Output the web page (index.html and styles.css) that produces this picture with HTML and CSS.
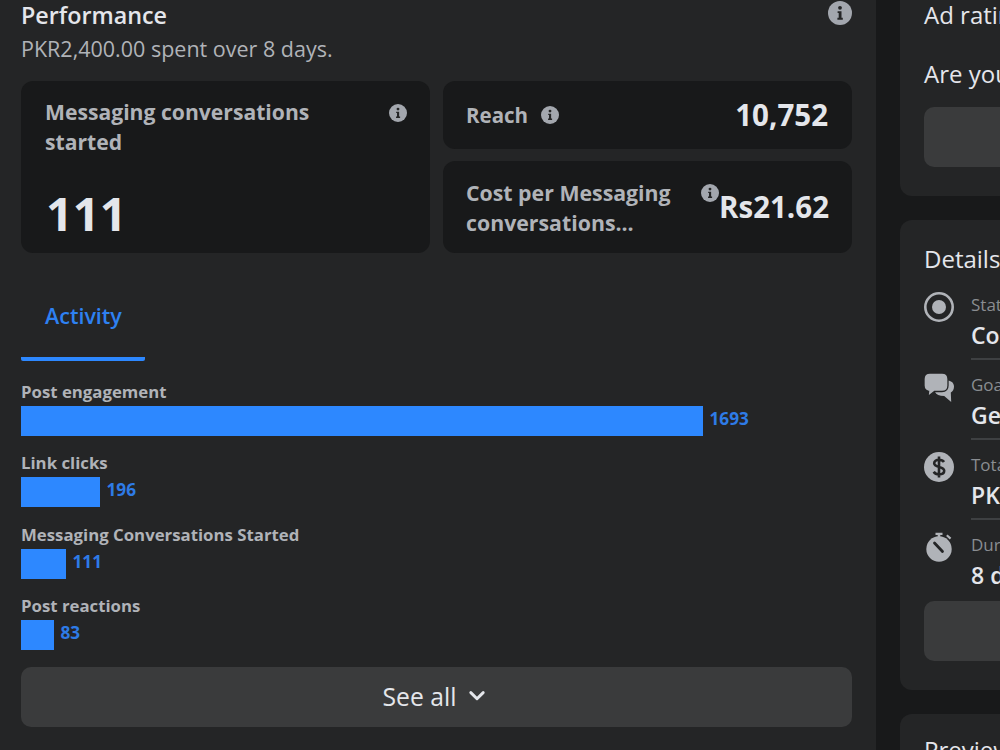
FILE: index.html
```html
<!DOCTYPE html>
<html lang="en">
<head>
<meta charset="utf-8">
<title>Performance</title>
<link rel="stylesheet" href="styles.css">
</head>
<body>
<svg class="defs" width="0" height="0" aria-hidden="true">
  <symbol id="info" viewBox="0 0 24 24">
    <circle cx="12" cy="12" r="12" fill="currentColor"/>
    <circle cx="12" cy="6.8" r="1.9" fill="#242526"/>
    <path d="M9.6 10.2h3.9v6.6h1.3v1.9H9.4v-1.9h1.3v-4.7H9.6z" fill="#242526"/>
  </symbol>
</svg>
<div class="page">
  <main class="main">
    <header class="head">
      <div>
        <h1 class="title">Performance</h1>
        <p class="sub"><span class="sub-strong">PKR2,400.00</span> spent over <span class="sub-strong">8 days.</span></p>
      </div>
      <svg class="info info-head"><use href="#info"/></svg>
    </header>

    <section class="stats">
      <div class="stat stat-big">
        <div class="stat-top">
          <span class="stat-label">Messaging conversations started</span>
          <svg class="info"><use href="#info"/></svg>
        </div>
        <div class="big-value">111</div>
      </div>
      <div class="stat-side">
        <div class="stat stat-row stat-reach">
          <span class="stat-label stat-label-short">Reach</span>
          <svg class="info info-inline"><use href="#info"/></svg>
          <span class="stat-value">10,752</span>
        </div>
        <div class="stat stat-row stat-cost">
          <span class="stat-label stat-label-wrap">Cost per Messaging conversations...</span>
          <svg class="info info-cost"><use href="#info"/></svg>
          <span class="stat-value">Rs21.62</span>
        </div>
      </div>
    </section>

    <nav class="tabs"><span class="tab">Activity</span></nav>

    <section class="bars">
      <div class="bar-row">
        <div class="bar-label">Post engagement</div>
        <div class="bar-line"><span class="bar" style="width:682px"></span><span class="bar-num">1693</span></div>
      </div>
      <div class="bar-row">
        <div class="bar-label">Link clicks</div>
        <div class="bar-line"><span class="bar" style="width:79px"></span><span class="bar-num">196</span></div>
      </div>
      <div class="bar-row">
        <div class="bar-label">Messaging Conversations Started</div>
        <div class="bar-line"><span class="bar" style="width:45px"></span><span class="bar-num">111</span></div>
      </div>
      <div class="bar-row">
        <div class="bar-label">Post reactions</div>
        <div class="bar-line"><span class="bar" style="width:33px"></span><span class="bar-num">83</span></div>
      </div>
    </section>

    <button class="see-all" type="button">See all
      <svg class="chev" viewBox="0 0 16 16"><path d="M2.5 5l5.5 5.5L13.5 5" fill="none" stroke="currentColor" stroke-width="2.6" stroke-linecap="round" stroke-linejoin="round"/></svg>
    </button>
  </main>

  <aside class="side">
    <section class="card card-rating">
      <h2 class="card-title">Ad rating</h2>
      <p class="question">Are you satisfied?</p>
      <div class="wide-btn"></div>
    </section>

    <section class="card card-details">
      <h2 class="card-title">Details</h2>
      <ul class="details">
        <li class="detail">
          <svg class="d-icon" viewBox="0 0 30 30"><circle cx="15" cy="15" r="13.7" fill="none" stroke="#b0b3b8" stroke-width="2.6"/><circle cx="15" cy="15" r="7" fill="#b0b3b8"/></svg>
          <div class="d-text"><span class="d-key">Status</span><span class="d-val">Completed</span></div>
        </li>
        <li class="detail">
          <svg class="d-icon" viewBox="0 0 30 30"><path d="M24 8.500c3.500.4 6 2.600 6 6 0 3-1.200 5-3.200 6l.4 9.500-7-6c-4.800 0-8-1.500-9.200-4z" fill="#b0b3b8"/><path d="M6 1h12c3.800 0 6 2.300 6 6v6.500c0 3.700-2.200 6-6 6h-7.500L4 24.500l.6-5.200C2 18.800 0 16.600 0 13.500V7c0-3.700 2.200-6 6-6z" fill="#b0b3b8" stroke="#242526" stroke-width="1.300"/></svg>
          <div class="d-text"><span class="d-key">Goal</span><span class="d-val">Get more messages</span></div>
        </li>
        <li class="detail">
          <svg class="d-icon" viewBox="0 0 30 30"><circle cx="15" cy="15" r="15" fill="#b0b3b8"/><path d="M20 10c-1-1.500-2.800-2.300-5-2.300-2.800 0-4.800 1.400-4.800 3.600 0 4.900 10 2.600 10 7.500 0 2.300-2.200 3.600-5.200 3.600-2.400 0-4.300-1-5.300-2.600M15 4.500v21" fill="none" stroke="#242526" stroke-width="2.600"/></svg>
          <div class="d-text"><span class="d-key">Total budget</span><span class="d-val">PKR2,400.00</span></div>
        </li>
        <li class="detail detail-last">
          <svg class="d-icon" viewBox="0 0 30 30"><circle cx="15" cy="17" r="12.700" fill="#b0b3b8"/><path d="M11.500 0.700h7v2.300h-2.200v2h-2.600v-2h-2.200zM23.500 2.400l3.800 3.400-1.500 1.600-3.700-3.400z" fill="#b0b3b8"/><path d="M10.500 11l8 8.500" stroke="#242526" stroke-width="2.800" stroke-linecap="round"/></svg>
          <div class="d-text"><span class="d-key">Duration</span><span class="d-val">8 days</span></div>
        </li>
      </ul>
      <div class="wide-btn"></div>
    </section>

    <section class="card card-preview">
      <h2 class="card-title">Preview</h2>
    </section>
  </aside>
</div>
</body>
</html>
```

FILE: styles.css
```css
* { box-sizing: border-box; }
html, body { margin: 0; padding: 0; height: 750px; overflow: hidden; background: #18191a; }
body { font-family: "Open Sans", "Noto Sans", "Liberation Sans", sans-serif; color: #e4e6eb; }
.defs { position: absolute; }
h1, h2, p, ul { margin: 0; padding: 0; }
ul { list-style: none; }

.page { display: flex; width: 1000px; height: 750px; overflow: hidden; }

.main { flex: 0 0 876px; height: 750px; background: #242526; padding: 0 24px 0 21px; }

.head { display: flex; justify-content: space-between; height: 81px; }
.title { font-size: 23.3px; font-weight: 600; line-height: 30px; color: #e4e6eb; }
.sub { font-size: 21.5px; line-height: 40px; margin-top: -1px; color: #b0b3b8; white-space: nowrap; }
.sub-strong { font-weight: 500; }
.info { width: 18px; height: 18px; color: #a3a7ae; flex: none; display: block; }
.info-head { width: 24px; height: 24px; margin: 1px 0 0 0; }

.stats { display: grid; grid-template-columns: 409px 409px; gap: 13px; height: 172px; }
.stat { background: #18191a; border-radius: 12px; }
.stat-big { padding: 16px 23px 0 24px; }
.stat-top { display: flex; justify-content: space-between; align-items: flex-start; }
.stat-top .info { margin-top: 7px; }
.stat-label { font-size: 21.3px; font-weight: 700; line-height: 30px; color: #b0b3b8; }
.stat-top .stat-label { width: 300px; font-size: 21.15px; }
.stat-label-short { font-size: 20.5px; }
.big-value { font-size: 47px; font-weight: 700; line-height: 60px; color: #e4e6eb; margin-top: 26px; padding-left: 1px; }
.stat-side { display: flex; flex-direction: column; gap: 12px; }
.stat-row { display: flex; align-items: center; padding: 0 24px 0 23px; }
.stat-reach { height: 68px; }
.stat-cost { height: 92px; }
.info-inline { margin-left: 13px; }
.stat-label-wrap { width: 235px; flex: none; margin-top: 1px; }
.info-cost { align-self: flex-start; margin-top: 23px; margin-left: 0; }
.stat-value { margin-left: auto; font-size: 29.5px; font-weight: 700; line-height: 40px; color: #e4e6eb; white-space: nowrap; }

.tabs { display: flex; margin-top: 12px; height: 107px; }
.tab { width: 124px; height: 96px; padding: 36px 0 0 24px; font-size: 21.5px; font-weight: 600; line-height: 30px; color: #2e81f2; border-bottom: 4px solid #2d88ff; border-radius: 0 0 2px 2px; white-space: nowrap; }

.bars { margin-top: 8px; display: flex; flex-direction: column; }
.bar-row { height: 71.3px; }
.bar-label { font-size: 16.8px; font-weight: 700; line-height: 24px; color: #b0b3b8; }
.bar-line { display: flex; align-items: center; gap: 6.500px; height: 30px; margin-top: 2px; }
.bar { display: block; height: 30px; background: #2d88ff; }
.bar-num { font-size: 17.2px; font-weight: 700; line-height: 24px; margin-top: -4px; color: #2e7be6; }

.see-all { display: flex; align-items: center; justify-content: center; gap: 12px; width: 100%; height: 60px; margin-top: 2px; padding: 0 4px 2px 0; border: 0; border-radius: 10px; background: #3a3b3c; color: #e4e6eb; font: 500 24.700px "Open Sans", "Noto Sans", sans-serif; }
.chev { width: 18px; height: 18px; }

.side { flex: 0 0 300px; margin-left: 24px; margin-top: -20px; display: flex; flex-direction: column; gap: 24px; }
.card { background: #242526; border-radius: 12px; padding: 0 24px; width: 300px; flex: none; }
.card-title { font-size: 24px; font-weight: 500; line-height: 32px; color: #e4e6eb; white-space: nowrap; }
.card-rating { height: 216px; padding-top: 20px; }
.card-rating .card-title { line-height: 30px; }
.question { font-size: 24px; line-height: 32px; margin-top: 28px; color: #e4e6eb; white-space: nowrap; }
.wide-btn { height: 60px; background: #3a3b3c; border-radius: 10px; }
.card-rating .wide-btn { margin-top: 17px; }
.card-details { height: 470px; padding-top: 23px; }
.details { margin-top: 13px; }
.detail { display: flex; gap: 17px; height: 80px; }
.detail-last { height: 72px; }
.d-icon { width: 30px; height: 30px; flex: none; margin-top: 4px; }
.d-text { flex: 1; display: flex; flex-direction: column; border-bottom: 2px solid #3e4042; height: 72px; white-space: nowrap; }
.detail-last .d-text { border-bottom: 0; }
.d-key { font-size: 17px; line-height: 24px; color: #8a8d91; margin-top: 5px; }
.d-val { font-size: 23px; font-weight: 600; line-height: 30px; color: #e4e6eb; margin-top: 3px; }
.card-details .wide-btn { margin-top: 1px; }
.card-preview { height: 100px; padding-top: 20px; }
```
